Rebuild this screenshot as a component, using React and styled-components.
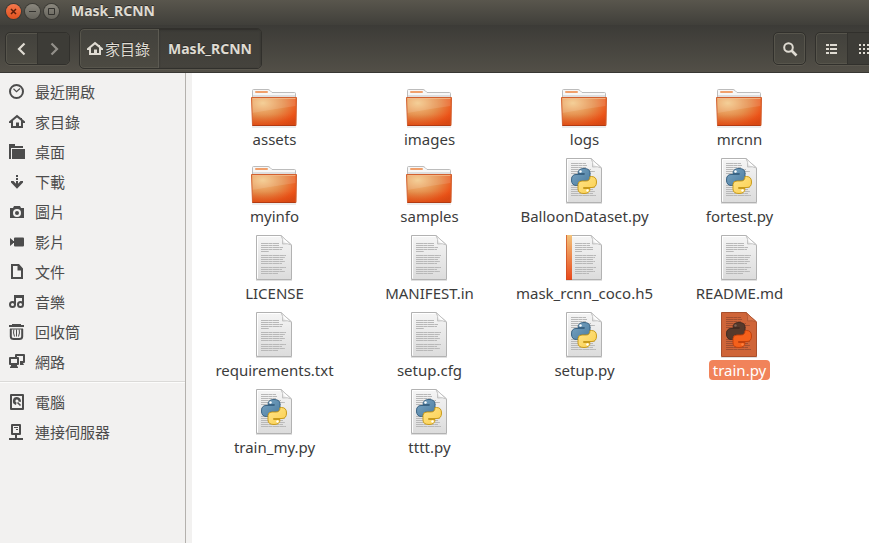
import React, { useState } from 'react'
import styled, { createGlobalStyle, css } from 'styled-components'

const GlobalStyle = createGlobalStyle`
  * {
    box-sizing: border-box;
  }
  html, body, #root {
    height: 100%;
  }
  body {
    margin: 0;
    overflow: hidden;
    background: #fff;
    color: #3c3c3c;
    font-family: "Noto Sans", "Noto Sans CJK TC", sans-serif;
    font-size: 15px;
  }
  button {
    margin: 0;
    padding: 0;
    border: 0;
    background: none;
    color: inherit;
    font: inherit;
  }
`

const Window = styled.div`
  display: flex;
  flex-direction: column;
  height: 100%;
`

const TitleBar = styled.header`
  flex: none;
  display: flex;
  align-items: center;
  gap: 4px;
  height: 25px;
  padding: 0 6px 3px;
  background: linear-gradient(#59564d, #403f3a);
  color: #dfdbd2;
`

const Title = styled.h1`
  margin: 0 0 0 8px;
  font-size: 14px;
  line-height: 20px;
  font-weight: 700;
  text-shadow: 0 -1px #2d2c28;
`

const WindowButton = styled.button`
  display: flex;
  width: 15px;
  height: 15px;
  border-radius: 50%;
  background: ${p => (p.$close ? 'linear-gradient(#f4784c, #e2521f)' : 'linear-gradient(#8b887e, #65635b)')};
  box-shadow: 0 0 0 1px #3c3b36;
  color: ${p => (p.$close ? '#5a1d0a' : '#33322e')};
`

const Toolbar = styled.div`
  flex: none;
  display: flex;
  align-items: center;
  gap: 9px;
  height: 48px;
  padding: 0 5px;
  border-bottom: 1px solid #383733;
  background: linear-gradient(#3c3b37, #524f47);
  color: #dfdbd2;
  overflow: hidden;
`

const ButtonGroup = styled.div`
  flex: none;
  display: flex;
  height: ${p => (p.$tall ? 41 : 33)}px;
  border: 1px solid #31302c;
  border-radius: 5px;
  background: linear-gradient(#42413c, #4c4a42);
  box-shadow: inset 0 0 0 1px #57554c, 0 1px #5a574e;
  overflow: hidden;
`

const Search = styled(ButtonGroup)`
  margin-left: auto;
`

// the last view button runs past the edge of the window
const ViewSwitch = styled(ButtonGroup)`
  margin-right: -16px;
`

const ToolButton = styled.button`
  display: flex;
  align-items: center;
  justify-content: center;
  width: 31px;
  color: ${p => (p.disabled ? '#93908a' : '#dfdbd2')};
  & + & {
    width: 32px;
    border-left: 1px solid #33322e;
    background: #3d3c37;
  }
`

const PathButton = styled.button`
  display: flex;
  align-items: center;
  gap: 2px;
  padding: 0 8px 0 7px;
  color: #dfdbd2;
  text-shadow: 0 -1px #2d2c28;
  ${p => p.$current && css`
    padding: 0 9px;
    border-left: 1px solid #5c5a52;
    background: linear-gradient(#3d3c37, #45433d);
    box-shadow: inset 0 1px 2px #2f2e2a;
    font-size: 14px;
    font-weight: 700;
  `}
`

const Main = styled.div`
  flex: 1;
  display: flex;
  min-height: 0;
`

const Sidebar = styled.nav`
  flex: none;
  width: 186px;
  padding-top: 4px;
  border-right: 1px solid #b4b1ad;
  background: #f2f1f0;
`

const PlaceList = styled.ul`
  margin: 0;
  padding: 0;
  list-style: none;
  & + & {
    margin-top: 4px;
    padding-top: 5px;
    border-top: 1px solid #dbdad8;
    box-shadow: inset 0 1px #fcfcfb;
  }
`

const Place = styled.a`
  display: flex;
  align-items: center;
  gap: 10px;
  height: 30px;
  padding-left: 9px;
  color: #4c4c4c;
  line-height: 30px;
  text-decoration: none;
`

const PlaceDivider = styled.div`
  flex: none;
  width: 6px;
  background: #f2f1f0;
`

const Files = styled.ul`
  flex: 1;
  display: grid;
  grid-template-columns: repeat(auto-fill, 155px);
  grid-auto-rows: 69px;
  gap: 8px 0;
  margin: 0;
  padding: 7px 0 0 5px;
  background: #fff;
  list-style: none;
`

const FileButton = styled.button`
  display: flex;
  flex-direction: column;
  align-items: center;
  gap: 1px;
  width: 100%;
`

const FileName = styled.span`
  padding: 0 4px;
  border-radius: 4px;
  line-height: 20px;
  ${p => p.$selected && css`
    background: #f1835a;
    color: #fff;
  `}
`

const Svg = styled.svg`
  display: block;
  flex: none;
`

const Icon = ({ children, size = 16 }) => (
  <Svg width={size} height={size} viewBox={`0 0 ${size} ${size}`} fill="currentColor" aria-hidden="true">
    {children}
  </Svg>
)

const homeShape = <path d="M8 .8 0 7.6V9h2v5h12V9h2V7.6L13 5V4h-1zM8 3.4 12 6.8V12h-2V8.6H7V12H4V6.8z" fillRule="evenodd" />

const placeIcons = {
  recent: (
    <g fill="none" stroke="currentColor">
      <circle cx="7.5" cy="7.5" r="6.5" strokeWidth="2" />
      <path d="M4.5 4.8 7.5 7.6 11 4.5" strokeWidth="1.2" />
    </g>
  ),
  home: homeShape,
  desktop: (
    <>
      <path d="M0 0h6v2h8v2H2v11H0z" />
      <path d="M3 5h13v10H3z" />
    </>
  ),
  download: (
    <>
      <path d="M7 1h2v2H7zM7 4h2v2H7zM7 7h2v4H7z" />
      <path d="M2 7h2.5L8 10.8 11.5 7H14v1.5L8 14.8 2 8.5z" />
    </>
  ),
  pictures: (
    <>
      <path d="M1 4h3l1-2h6l1 2h3v10H1zM8 5a4 4 0 1 0 0 8 4 4 0 0 0 0-8z" fillRule="evenodd" />
      <circle cx="8" cy="9" r="2" />
    </>
  ),
  videos: <path d="M1 4l3 2.500V7h1V4.500q0-1 1-1h8q1 0 1 1v7q0 1-1 1H6q-1 0-1-1V9H4v.5L1 12z" />,
  documents: (
    <>
      <path d="M2 0h8l4 4.5V15H2zM4 2v11h8V6.5H8.5V2z" fillRule="evenodd" />
      <path d="M9 1l4 4H9z" />
    </>
  ),
  music: (
    <g fill="none" stroke="currentColor" strokeWidth="2">
      <circle cx="3.5" cy="10.5" r="2.5" />
      <circle cx="11.5" cy="10.5" r="2.5" />
      <path d="M6 11V2h8v9M6 3h8" />
    </g>
  ),
  trash: (
    <>
      <path d="M3 0h9v1h3v2H0V1h3zM4.5 1h6V1H4.5z" />
      <path d="M1.8 5v7.5q0 2.500 3 2.500h5.4q3 0 3-2.500V5" fill="none" stroke="currentColor" strokeWidth="2" />
      <path d="M4.8 5.5q-.8 3.500.7 7M7.5 5.5v7M10.2 5.500q.8 3.500-.7 7" fill="none" stroke="currentColor" />
      <path d="M1 4.5h13v1H1z" />
    </>
  ),
  network: (
    <>
      <path d="M7 0h8q1 0 1 1v7q0 1-1 1h-1l1 2h-4V7h3V2H8v1H6V1q0-1 1-1z" />
      <path d="M1 3h8q1 0 1 1v6q0 1-1 1H8v1.500h1V14H1v-1.500h1V11H1q-1 0-1-1V4q0-1 1-1zM2 5v4h6V5z" fillRule="evenodd" />
    </>
  ),
  computer: (
    <>
      <path d="M2 0h12q1 0 1 1v14q0 1-1 1H2q-1 0-1-1V1q0-1 1-1zM3 2v12h10V2z" fillRule="evenodd" />
      <path d="M8 3a4 4 0 0 1 3.800 5L9.400 7.400A1.500 1.500 0 1 0 7.600 8.500L7 10.900A4 4 0 0 1 8 3z" fillRule="evenodd" />
      <path d="M8.500 8.500 11.500 11.500" stroke="currentColor" strokeWidth="1.600" />
    </>
  ),
  server: (
    <>
      <path d="M3 0h8q1 0 1 1v9q0 1-1 1H8v3h6v2H0v-2h6v-3H3q-1 0-1-1V1q0-1 1-1zM4 2v7h6V2z" fillRule="evenodd" />
      <path d="M5 3h4v1H5zM7 5h2v1H7z" />
    </>
  ),
}

const places = [
  ['recent', '最近開啟'],
  ['home', '家目錄'],
  ['desktop', '桌面'],
  ['download', '下載'],
  ['pictures', '圖片'],
  ['videos', '影片'],
  ['documents', '文件'],
  ['music', '音樂'],
  ['trash', '回收筒'],
  ['network', '網路'],
]

const devices = [
  ['computer', '電腦'],
  ['server', '連接伺服器'],
]

const files = [
  { name: 'assets', type: 'folder' },
  { name: 'images', type: 'folder' },
  { name: 'logs', type: 'folder' },
  { name: 'mrcnn', type: 'folder' },
  { name: 'myinfo', type: 'folder' },
  { name: 'samples', type: 'folder' },
  { name: 'BalloonDataset.py', type: 'python' },
  { name: 'fortest.py', type: 'python' },
  { name: 'LICENSE', type: 'text' },
  { name: 'MANIFEST.in', type: 'text' },
  { name: 'mask_rcnn_coco.h5', type: 'data' },
  { name: 'README.md', type: 'text' },
  { name: 'requirements.txt', type: 'text' },
  { name: 'setup.cfg', type: 'text' },
  { name: 'setup.py', type: 'python' },
  { name: 'train.py', type: 'python' },
  { name: 'train_my.py', type: 'python' },
  { name: 'tttt.py', type: 'python' },
]

const HiddenSvg = styled(Svg)`
  position: absolute;
`

const Gradients = () => (
  <HiddenSvg width="0" height="0" aria-hidden="true">
    <defs>
      <radialGradient id="folder" cx="0.25" cy="0.2" r="0.95">
        <stop offset="0" stopColor="#f3c98a" />
        <stop offset="0.5" stopColor="#e58c4a" />
        <stop offset="0.85" stopColor="#ec5419" />
        <stop offset="1" stopColor="#e04a14" />
      </radialGradient>
      <linearGradient id="folderShade" x1="0" y1="0" x2="0" y2="1">
        <stop offset="0.6" stopColor="#c8440f" stopOpacity="0" />
        <stop offset="1" stopColor="#c8440f" stopOpacity="0.35" />
      </linearGradient>
      <linearGradient id="page" x1="0" y1="0" x2="0" y2="1">
        <stop offset="0" stopColor="#f5f5f5" />
        <stop offset="1" stopColor="#dcdcdc" />
      </linearGradient>
      <linearGradient id="fold" x1="0" y1="1" x2="1" y2="0">
        <stop offset="0" stopColor="#bdbdbd" />
        <stop offset="0.4" stopColor="#fff" />
        <stop offset="1" stopColor="#e2e2e2" />
      </linearGradient>
      <linearGradient id="spine" x1="0" y1="0" x2="0" y2="1">
        <stop offset="0" stopColor="#f2c27a" />
        <stop offset="1" stopColor="#e8481b" />
      </linearGradient>
      <linearGradient id="blue" x1="0" y1="0" x2="1" y2="1">
        <stop offset="0" stopColor="#7ba6c4" />
        <stop offset="1" stopColor="#4a7b9f" />
      </linearGradient>
      <linearGradient id="yellow" x1="1" y1="1" x2="0" y2="0">
        <stop offset="0" stopColor="#ffe48a" />
        <stop offset="1" stopColor="#fbcf4c" />
      </linearGradient>
    </defs>
  </HiddenSvg>
)

const FolderIcon = () => (
  <Svg width="49" height="48" viewBox="0 0 49 48" aria-hidden="true">
    <path d="M2 46.5h44v1H2z" fill="#000" opacity="0.15" />
    <path d="M2.5 20V10.5q0-1 1-1H18q1 0 2 1l2 2h22.500q1 0 1 1V20z" fill="#f7f7f7" stroke="#bcbcbc" />
    <path d="M3 15h42v2H3z" fill="#dedede" />
    <rect x="5" y="11" width="13" height="2" rx="1" fill="#f0a06c" />
    <path d="M1.5 17.5h45l-.5 28H2.5z" fill="url(#folder)" />
    <path d="M1.5 17.5h45l-.5 28H2.5z" fill="url(#folderShade)" stroke="#d2602f" />
    <path d="M2.5 18.5h43V26Q30 28 2.5 33z" fill="#fff" opacity="0.12" />
    <path d="M2.5 18.5h43" stroke="#f3bd8d" opacity="0.8" />
    <path d="M2.5 45.5h43" stroke="#b23a12" />
  </Svg>
)

const textRows = [
  [9, 18], [11, 18], [13, 22], [15, 21], [17, 8],
  [21, 25], [23, 24], [25, 22], [27, 24], [29, 21],
  [33, 25], [35, 21], [37, 24], [39, 17],
]

const pythonRows = [
  [6, 15], [8, 16], [10, 15], [12, 20], [14, 24], [16, 20], [20, 24],
  [24, 24], [28, 22], [30, 24], [32, 22], [34, 24], [36, 22], [38, 25],
]

const snake = 'M7 5.500Q7 .5 13 .5t6 4.500v4.500q0 3.500-4 3.500h-4q-4 0-4 4.500H5.500Q.5 17.500.5 12T5 6.500h8.500v-1z'

const PageIcon = ({ type, selected }) => {
  const rows = type === 'python' ? pythonRows : textRows
  const left = type === 'data' ? 15 : 11
  const scale = type === 'data' ? 0.84 : 1
  return (
    <Svg width="49" height="48" viewBox="0 0 49 48" aria-hidden="true">
      <path d="M6 46h36v1H6z" fill="#000" opacity="0.12" />
      <path
        d="M6.5 1.5H31L41.5 11v34.5h-35z"
        fill={selected ? '#cf6539' : 'url(#page)'}
        stroke={selected ? '#a9502d' : '#b2b2b2'}
      />
      {!selected && <path d="M7.5 44.5v-42h23" fill="none" stroke="#fff" />}
      {type === 'data' && (
        <>
          <path d="M6 1h6v45H6z" fill="url(#spine)" />
          <path d="M6.5 1v44.5H12" fill="none" stroke="#cf4a20" opacity="0.7" />
        </>
      )}
      {rows.map(([y, width]) => (
        <path
          key={y}
          d={`M${left} ${y + 0.5}h${Math.round(width * scale)}`}
          stroke={selected ? '#a04f31' : '#b8b8b8'}
          strokeDasharray="7 .3 4 .3"
        />
      ))}
      <path
        d="M31 1.5 41.5 11q-4-2-9-1 1-5-1.500-8.500z"
        fill={selected ? '#da784e' : 'url(#fold)'}
        stroke={selected ? '#b65a35' : '#c2c2c2'}
      />
      {type === 'python' && (
        <g transform="translate(11 11)">
          <path d={snake} fill={selected ? '#56392b' : 'url(#blue)'} stroke={selected ? '#432b21' : '#3a6485'} />
          <path
            d={snake}
            transform="rotate(180 13 13)"
            fill={selected ? '#f4601b' : 'url(#yellow)'}
            stroke={selected ? '#c2410d' : '#c99b1c'}
          />
          <circle cx="9.5" cy="3.500" r="1.200" fill={selected ? '#7b6358' : '#fff'} />
          <circle cx="16.500" cy="22.500" r="1.200" fill={selected ? '#ff8240' : '#fff'} />
        </g>
      )}
    </Svg>
  )
}

const Places = ({ items }) => (
  <PlaceList>
    {items.map(([icon, label]) => (
      <li key={icon}>
        <Place href={`#${icon}`}>
          <Icon>{placeIcons[icon]}</Icon>
          {label}
        </Place>
      </li>
    ))}
  </PlaceList>
)

const App = () => {
  const [selected, setSelected] = useState('train.py')

  return (
    <Window>
      <GlobalStyle />
      <Gradients />
      <TitleBar>
        <WindowButton $close aria-label="Close">
          <Icon size={15}><path d="M5 5l5 5M10 5l-5 5" stroke="currentColor" strokeWidth="1.5" /></Icon>
        </WindowButton>
        <WindowButton aria-label="Minimize">
          <Icon size={15}><path d="M4 7h7v1H4z" /></Icon>
        </WindowButton>
        <WindowButton aria-label="Maximize">
          <Icon size={15}><path d="M4.5 4.5h6v6h-6z" fill="none" stroke="currentColor" /></Icon>
        </WindowButton>
        <Title>Mask_RCNN</Title>
      </TitleBar>
      <Toolbar>
        <ButtonGroup>
          <ToolButton aria-label="Back">
            <Icon><path d="M10.5 2.5 5 8l5.500 5.500" fill="none" stroke="currentColor" strokeWidth="2.2" /></Icon>
          </ToolButton>
          <ToolButton aria-label="Forward" disabled>
            <Icon><path d="M5.5 2.5 11 8l-5.500 5.500" fill="none" stroke="currentColor" strokeWidth="2.2" /></Icon>
          </ToolButton>
        </ButtonGroup>
        <ButtonGroup $tall>
          <PathButton>
            <Icon>{homeShape}</Icon>
            家目錄
          </PathButton>
          <PathButton $current>Mask_RCNN</PathButton>
        </ButtonGroup>
        <Search>
          <ToolButton aria-label="Search">
            <Icon>
              <circle cx="6.5" cy="6.5" r="4.3" fill="none" stroke="currentColor" strokeWidth="2" />
              <path d="M9.5 9.5l5 5" stroke="currentColor" strokeWidth="2.6" />
            </Icon>
          </ToolButton>
        </Search>
        <ViewSwitch>
          <ToolButton aria-label="List view">
            <Icon><path d="M2 3h3v2H2zM6 3h7v2H6zM2 7h3v2H2zM6 7h7v2H6zM2 11h3v2H2zM6 11h7v2H6z" /></Icon>
          </ToolButton>
          <ToolButton aria-label="Icon view">
            <Icon>
              <path d="M3 3h2v2H3zM7 3h2v2H7zM11 3h2v2h-2zM3 7h2v2H3zM7 7h2v2H7zM11 7h2v2h-2zM3 11h2v2H3zM7 11h2v2H7zM11 11h2v2h-2z" />
            </Icon>
          </ToolButton>
        </ViewSwitch>
      </Toolbar>
      <Main>
        <Sidebar>
          <Places items={places} />
          <Places items={devices} />
        </Sidebar>
        <PlaceDivider />
        <Files>
          {files.map(({ name, type }) => (
            <li key={name}>
              <FileButton onClick={() => setSelected(name)}>
                {type === 'folder' ? <FolderIcon /> : <PageIcon type={type} selected={name === selected} />}
                <FileName $selected={name === selected}>{name}</FileName>
              </FileButton>
            </li>
          ))}
        </Files>
      </Main>
    </Window>
  )
}

export default App
